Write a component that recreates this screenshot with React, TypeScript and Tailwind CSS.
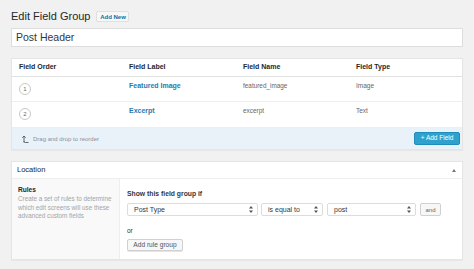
import React from 'react';

const font = { fontFamily: '"Liberation Sans", Arial, sans-serif' };

const SelectArrows: React.FC = () => (
  <svg width="4" height="7" viewBox="0 0 4 7" className="shrink-0">
    <path d="M0 2.6 L2 0 L4 2.6 Z" fill="#555" />
    <path d="M0 4.4 L2 7 L4 4.4 Z" fill="#555" />
  </svg>
);

const FakeSelect: React.FC<{ label: string; className: string }> = ({ label, className }) => (
  <div
    className={`flex h-[13px] items-center justify-between rounded-[2px] border border-[#dcdcdc] bg-white pl-[6px] pr-[4px] text-[7px] text-[#32373c] ${className}`}
  >
    <span className="leading-none">{label}</span>
    <SelectArrows />
  </div>
);

const OrderBadge: React.FC<{ n: number }> = ({ n }) => (
  <div className="flex h-[12px] w-[12px] items-center justify-center rounded-full border border-[#c8c8c8] bg-white text-[6px] leading-none text-[#666]">
    {n}
  </div>
);

const fields = [
  { label: 'Featured Image', name: 'featured_image', type: 'Image', h: 'h-[25px]' },
  { label: 'Excerpt', name: 'excerpt', type: 'Text', h: 'h-[26px]' },
];

export default function App() {
  return (
    <div className="h-[269px] w-[474px] overflow-hidden bg-[#f1f1f1] px-[11px] pt-[11px]" style={font}>
      {/* title */}
      <div className="flex h-[11px] items-center gap-[6px]">
        <h1 className="text-[11px] font-normal leading-none text-[#23282d]">Edit Field Group</h1>
        <button className="flex h-[11px] w-[33px] items-center justify-center rounded-[2px] border border-[#e0e0e0] bg-[#f7f7f7] text-[6px] font-bold leading-none text-[#0073aa]">
          Add New
        </button>
      </div>

      <div className="mt-[6px] flex h-[19px] items-center border border-[#dddddd] bg-white pl-[4px] text-[10.5px] text-[#32373c]">
        Post Header
      </div>

      {/* fields table */}
      <div className="mt-[11px] border border-[#e5e5e5] bg-white shadow-[0_1px_1px_rgba(0,0,0,0.04)]">
        <div className="grid h-[18px] grid-cols-[110px_114px_113px_1fr] items-center border-b border-[#e1e1e1] px-[7px] text-[7px] font-bold text-[#23282d]">
          <span>Field Order</span>
          <span>Field Label</span>
          <span>Field Name</span>
          <span>Field Type</span>
        </div>
        {fields.map((f, i) => (
          <div
            key={f.name}
            className={`grid grid-cols-[110px_114px_113px_1fr] border-b border-[#eeeeee] px-[7px] ${f.h}`}
          >
            <div className="pt-[6px]">
              <OrderBadge n={i + 1} />
            </div>
            <div className="pt-[4px] text-[7px] font-bold leading-[10px] text-[#2a7ab0]">{f.label}</div>
            <div className="pt-[4px] text-[6.4px] leading-[10px] text-[#666]">{f.name}</div>
            <div className="pt-[4px] text-[6.5px] leading-[10px] text-[#666]">{f.type}</div>
          </div>
        ))}
        <div className="flex h-[21px] items-center justify-between bg-[#eaf2f9] pl-[10px] pr-[2px]">
          <div className="flex items-center gap-[4px]">
            <svg width="7" height="8" viewBox="0 0 7 8">
              <path d="M2 7.5 L2 1.2 M0.4 2.8 L2 1 L3.6 2.8 M2 6.4 Q2 7.5 3.4 7.5 L6.5 7.5" fill="none" stroke="#555" strokeWidth="0.9" />
            </svg>
            <span className="text-[6px] leading-none text-[#8a8f94]">Drag and drop to reorder</span>
          </div>
          <button className="flex h-[13px] w-[46px] items-center justify-center rounded-[2px] border border-[#1f8dbb] bg-[#2ea2cc] text-[6.5px] leading-none text-white">
            + Add Field
          </button>
        </div>
      </div>

      {/* location */}
      <div className="mt-[11px] border border-[#e5e5e5] bg-white shadow-[0_1px_1px_rgba(0,0,0,0.04)]">
        <div className="flex h-[17px] items-center justify-between border-b border-[#eeeeee] pl-[5px] pr-[6px]">
          <span className="text-[7.5px] font-medium leading-none text-[#23282d]">Location</span>
          <svg width="4" height="3" viewBox="0 0 4 3">
            <path d="M0 3 L2 0 L4 3 Z" fill="#777" />
          </svg>
        </div>
        <div className="flex h-[80px]">
          <div className="w-[108px] shrink-0 border-r border-[#eeeeee] bg-[#f9f9f9] pl-[6px] pt-[7px]">
            <div className="text-[6.6px] font-bold leading-[8px] text-[#23282d]">Rules</div>
            <div className="mt-[1px] text-[6.3px] leading-[8.5px] text-[#a0a5aa]">
              Create a set of rules to determine
              <br />
              which edit screens will use these
              <br />
              advanced custom fields
            </div>
          </div>
          <div className="flex-1 pl-[7px] pt-[11px]">
            <div className="text-[6.8px] font-semibold leading-[8px] text-[#32373c]">Show this field group if</div>
            <div className="mt-[5px] flex items-center">
              <FakeSelect label="Post Type" className="w-[131px]" />
              <FakeSelect label="is equal to" className="ml-[3px] w-[62px]" />
              <FakeSelect label="post" className="ml-[4px] w-[89px]" />
              <button className="ml-[4px] flex h-[13px] w-[21px] items-center justify-center rounded-[2px] border border-[#d0d0d0] bg-[#f7f7f7] text-[6px] leading-none text-[#666]">
                and
              </button>
            </div>
            <div className="mt-[11px] text-[6.5px] leading-[8px] text-[#32373c]">or</div>
            <button className="mt-[4px] flex h-[12px] w-[56px] items-center justify-center rounded-[2px] border border-[#d0d0d0] bg-[#f7f7f7] text-[6.6px] leading-none text-[#555] shadow-[0_1px_0_#e5e5e5]">
              Add rule group
            </button>
          </div>
        </div>
      </div>
    </div>
  );
}
